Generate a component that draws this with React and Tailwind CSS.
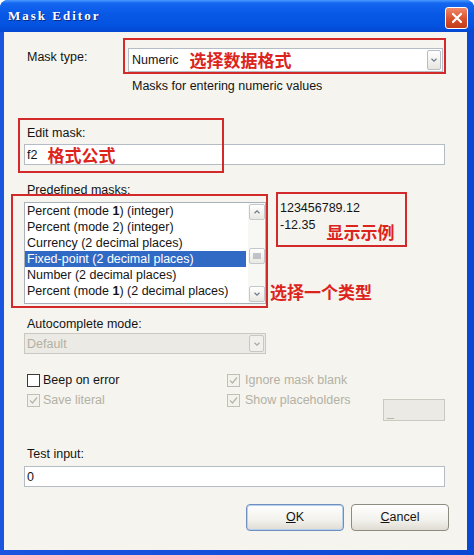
import React from "react";

function Chevron({ dir = "down", color = "#5a6b80", size = 12 }) {
  const d = dir === "down" ? "M3 4.5 L6 7.5 L9 4.5" : "M3 7.5 L6 4.5 L9 7.5";
  return (
    <svg width={size} height={size} viewBox="0 0 12 12">
      <path d={d} fill="none" stroke={color} strokeWidth="1.4" />
    </svg>
  );
}

function Check({ color }) {
  return (
    <svg width="11" height="11" viewBox="0 0 11 11">
      <path d="M2 5.5 L4.5 8 L9 2.5" fill="none" stroke={color} strokeWidth="1.3" />
    </svg>
  );
}

function CheckBox({ checked, disabled }) {
  return (
    <div
      className={
        "w-[13px] h-[13px] shrink-0 flex items-center justify-center border " +
        (disabled ? "border-[#c2c0b4] bg-[#f3f2ec]" : "border-[#3a3a3a] bg-white")
      }
    >
      {checked && <Check color={disabled ? "#b8b6aa" : "#21a121"} />}
    </div>
  );
}

function ScrollBtn({ children }) {
  return (
    <div className="w-[16px] h-[16px] rounded-[2px] border border-[#c4c7cc] bg-[linear-gradient(to_bottom,#ffffff,#e9e8e2)] flex items-center justify-center">
      {children}
    </div>
  );
}

const items = [
  ["Percent (mode ", "1", ") (integer)"],
  ["Percent (mode 2) (integer)"],
  ["Currency (2 decimal places)"],
  ["Fixed-point (2 decimal places)"],
  ["Number (2 decimal places)"],
  ["Percent (mode ", "1", ") (2 decimal places)"],
];

export default function App() {
  const cjk = "font-['Noto_Sans_CJK_SC',sans-serif] font-bold text-[#dc241c] text-[17px] leading-[20px]";
  return (
    <div className="w-[474px] h-[555px] flex flex-col bg-[linear-gradient(to_right,#1a55e0,#0a48d4)] rounded-t-[8px] overflow-hidden font-['Liberation_Sans',Arial,sans-serif] text-[12.5px] text-[#141414]">
      {/* Title bar */}
      <div className="h-[32px] shrink-0 flex items-start justify-between pl-[8px] pr-[6px] bg-[linear-gradient(to_bottom,#4a9bff_0%,#1466f0_10%,#0858e6_45%,#0452e0_80%,#0448d2_100%)]">
        <span className="mt-[8px] text-white font-['Liberation_Serif',serif] font-bold text-[13px] leading-[16px] tracking-[2px] [text-shadow:1px_1px_0_#0a2a80]">
          Mask Editor
        </span>
        <div className="mt-[7px] w-[23px] h-[22px] rounded-[3px] border border-white bg-[linear-gradient(to_bottom,#f0896a,#d8502c_55%,#c23c18)] flex items-center justify-center">
          <svg width="12" height="12" viewBox="0 0 12 12">
            <path d="M2 2 L10 10 M10 2 L2 10" stroke="white" strokeWidth="2.2" strokeLinecap="round" />
          </svg>
        </div>
      </div>

      {/* Client area */}
      <div className="flex-1 ml-[4px] mr-[7px] mb-[5px] bg-[#f5f4ef] relative flex flex-col pl-[20px] pt-[16px]">
        {/* Mask type */}
        <div className="flex items-start">
          <div className="w-[104px] pl-[3px] pt-[2px] leading-[14px]">Mask type:</div>
          <div className="w-[315px] h-[24px] bg-white border border-[#b4bcc6] flex items-center pl-[3px] pr-[1px]">
            <span className="leading-[14px]">Numeric</span>
            <span className={cjk + " ml-[11px]"}>选择数据格式</span>
            <div className="ml-auto w-[14px] h-[20px] rounded-[2px] border border-[#b8bcc4] bg-[linear-gradient(to_bottom,#ffffff,#e6e5df)] flex items-center justify-center">
              <Chevron size={10} color="#6d7a8a" />
            </div>
          </div>
        </div>
        <div className="mt-[7px] pl-[108px] leading-[14px]">Masks for entering numeric values</div>

        {/* Edit mask */}
        <div className="mt-[33px] pl-[3px] leading-[14px]">Edit mask:</div>
        <div className="mt-[4px] w-[421px] h-[21px] bg-white border border-[#b4bcc6] flex items-center pl-[2px]">
          <span className="leading-[14px]">f2</span>
          <span className={cjk + " ml-[10px]"}>格式公式</span>
        </div>

        {/* Predefined masks */}
        <div className="mt-[18px] pl-[3px] leading-[14px]">Predefined masks:</div>
        <div className="mt-[5px] flex h-[102px]">
          <div className="w-[242px] h-[102px] border border-[#a8b0ba] bg-white flex">
            <div className="flex-1 flex flex-col pr-[2px]">
              {items.map((it, i) => (
                <div
                  key={i}
                  className={
                    "h-[16px] leading-[16px] pl-[2px] whitespace-nowrap " +
                    (i === 3 ? "bg-[#316ac5] text-white" : "")
                  }
                >
                  {it.length === 3 ? (
                    <>
                      {it[0]}
                      <b>{it[1]}</b>
                      {it[2]}
                    </>
                  ) : (
                    it[0]
                  )}
                </div>
              ))}
            </div>
            <div className="w-[17px] bg-[#f7f7f3] flex flex-col items-center pt-[1px]">
              <ScrollBtn>
                <Chevron dir="up" size={10} color="#6d7a8a" />
              </ScrollBtn>
              <div className="mt-[28px]">
                <ScrollBtn>
                  <svg width="8" height="6" viewBox="0 0 8 6">
                    <path d="M0 1 H8 M0 3 H8 M0 5 H8" stroke="#8b93a0" strokeWidth="1" />
                  </svg>
                </ScrollBtn>
              </div>
              <div className="mt-auto mb-[1px]">
                <ScrollBtn>
                  <Chevron size={10} color="#6d7a8a" />
                </ScrollBtn>
              </div>
            </div>
          </div>
          <div className="ml-[4px] flex flex-col">
            <div className="pl-[10px] -mt-[1px]">
              <div className="leading-[14px]">123456789.12</div>
              <div className="mt-[3px] flex items-start">
                <span className="leading-[14px]">-12.35</span>
                <span className={cjk + " ml-[11px] mt-[4px]"}>显示示例</span>
              </div>
            </div>
            <div className={cjk + " mt-auto mb-[2px]"}>选择一个类型</div>
          </div>
        </div>

        {/* Autocomplete */}
        <div className="mt-[13px] pl-[3px] leading-[14px]">Autocomplete mode:</div>
        <div className="mt-[2px] w-[242px] h-[21px] bg-[#ebeae4] border border-[#cbc9bf] flex items-center pl-[2px] pr-[1px]">
          <span className="text-[#b3b1a4] leading-[14px]">Default</span>
          <div className="ml-auto w-[15px] h-[17px] rounded-[2px] border border-[#c9c8c0] bg-[#f1f0ec] flex items-center justify-center">
            <Chevron size={10} color="#a9a8a0" />
          </div>
        </div>

        {/* Checkboxes */}
        <div className="mt-[18px] h-[16px] flex items-center pl-[3px]">
          <div className="w-[200px] flex items-center gap-[3px]">
            <CheckBox />
            <span className="leading-[14px]">Beep on error</span>
          </div>
          <div className="flex items-center gap-[5px]">
            <CheckBox checked disabled />
            <span className="leading-[14px] text-[#b3b1a4]">Ignore mask blank</span>
          </div>
        </div>
        <div className="mt-[4px] flex items-start pl-[3px]">
          <div className="w-[200px] h-[16px] flex items-center gap-[3px]">
            <CheckBox checked disabled />
            <span className="leading-[14px] text-[#b3b1a4]">Save literal</span>
          </div>
          <div className="w-[156px] h-[16px] flex items-center gap-[5px]">
            <CheckBox checked disabled />
            <span className="leading-[14px] text-[#b3b1a4]">Show placeholders</span>
          </div>
          <div className="mt-[7px] w-[62px] h-[22px] bg-[#ebeae4] border border-[#cbc9bf] flex items-end pl-[3px] pb-[3px]">
            <span className="text-[#b3b1a4] leading-[10px]">_</span>
          </div>
        </div>

        {/* Test input */}
        <div className="mt-[26px] pl-[3px] leading-[14px]">Test input:</div>
        <div className="mt-[5px] w-[421px] h-[21px] bg-white border border-[#b4bcc6] flex items-center pl-[2px]">
          <span className="leading-[14px]">0</span>
        </div>

        {/* Buttons */}
        <div className="mt-[17px] flex pl-[222px] gap-[7px]">
          <div className="w-[98px] h-[27px] rounded-[4px] border border-[#6f8fbf] bg-[linear-gradient(to_bottom,#ffffff,#f2f1ec_60%,#dedcd2)] shadow-[inset_0_0_0_1px_#b8d0f0] flex items-center justify-center">
            <span>
              <span className="underline">O</span>K
            </span>
          </div>
          <div className="w-[98px] h-[27px] rounded-[4px] border border-[#8e8c80] bg-[linear-gradient(to_bottom,#ffffff,#f2f1ec_60%,#dedcd2)] flex items-center justify-center">
            <span>
              <span className="underline">C</span>ancel
            </span>
          </div>
        </div>

        {/* Red annotation rectangles */}
        <div className="absolute left-[119px] top-[6px] w-[323px] h-[36px] border-2 border-[#d22a2a] pointer-events-none" />
        <div className="absolute left-[14px] top-[86px] w-[206px] h-[55px] border-2 border-[#d22a2a] pointer-events-none" />
        <div className="absolute left-[7px] top-[162px] w-[257px] h-[114px] border-2 border-[#d22a2a] pointer-events-none" />
        <div className="absolute left-[272px] top-[160px] w-[131px] h-[55px] border-2 border-[#d22a2a] pointer-events-none" />
      </div>
    </div>
  );
}
